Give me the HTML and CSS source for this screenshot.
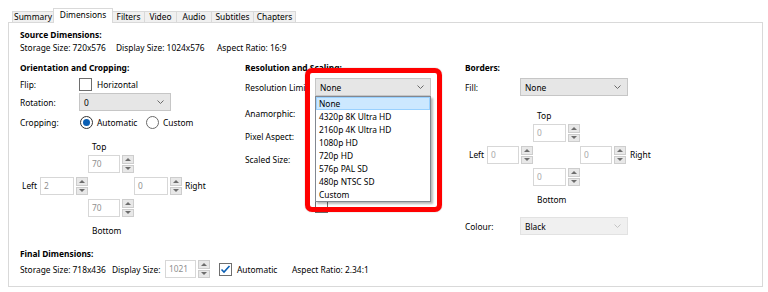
FILE: index.html
```html
<!DOCTYPE html>
<html>
<head>
<meta charset="utf-8">
<link rel="stylesheet" href="styles.css">
</head>
<body>
<div class="window">
  <div class="tabs">
    <div class="tab t-summary">Summary</div>
    <div class="tab active t-dim">Dimensions</div>
    <div class="tab t-filters">Filters</div>
    <div class="tab t-video">Video</div>
    <div class="tab t-audio">Audio</div>
    <div class="tab t-subs">Subtitles</div>
    <div class="tab t-chap">Chapters</div>
  </div>
  <div class="panel">
    <div class="source">
      <div class="heading">Source Dimensions:</div>
      <div class="info">
        <span class="i-storage">Storage Size: 720x576</span>
        <span class="i-display">Display Size: 1024x576</span>
        <span>Aspect Ratio: 16:9</span>
      </div>
    </div>

    <div class="columns">
      <div class="col col-left">
        <div class="heading">Orientation and Cropping:</div>
        <div class="row row-flip">
          <span class="label lw-left">Flip:</span>
          <span class="check"></span>
          <span class="check-label">Horizontal</span>
        </div>
        <div class="row row-rot">
          <span class="label lw-left">Rotation:</span>
          <div class="combo w-rot"><span>0</span><svg class="chev" width="7" height="4" viewBox="0 0 7 4"><path d="M.5 .5 3.5 3.5 6.5 .5" fill="none" stroke="#6a6a6a"/></svg></div>
        </div>
        <div class="row row-crop">
          <span class="label lw-left">Cropping:</span>
          <span class="radio on"></span><span class="radio-label rl-auto">Automatic</span>
          <span class="radio"></span><span class="radio-label">Custom</span>
        </div>
        <div class="cross cross-left">
          <span class="c-top">Top</span>
          <div class="spin s-top"><span class="box">70</span><span class="btns"><span class="up"></span><span class="down"></span></span></div>
          <span class="c-left">Left</span>
          <div class="spin s-left"><span class="box">2</span><span class="btns"><span class="up"></span><span class="down"></span></span></div>
          <div class="spin s-right"><span class="box">0</span><span class="btns"><span class="up"></span><span class="down"></span></span></div>
          <span class="c-right">Right</span>
          <div class="spin s-bottom"><span class="box">70</span><span class="btns"><span class="up"></span><span class="down"></span></span></div>
          <span class="c-bottom">Bottom</span>
        </div>
      </div>

      <div class="col col-mid">
        <div class="heading">Resolution and Scaling:</div>
        <div class="row mrow m-res">
          <span class="label lw-mid clip">Resolution Limit:</span>
          <div class="combo-wrap">
            <div class="combo w-mid"><span>None</span><svg class="chev" width="7" height="4" viewBox="0 0 7 4"><path d="M.5 .5 3.5 3.5 6.5 .5" fill="none" stroke="#6a6a6a"/></svg></div>
            <div class="popup">
              <div class="opt sel">None</div>
              <div class="opt">4320p 8K Ultra HD</div>
              <div class="opt">2160p 4K Ultra HD</div>
              <div class="opt">1080p HD</div>
              <div class="opt">720p HD</div>
              <div class="opt">576p PAL SD</div>
              <div class="opt">480p NTSC SD</div>
              <div class="opt">Custom</div>
            </div>
            <div class="annot"></div>
          </div>
        </div>
        <div class="row mrow m-anam">
          <span class="label lw-mid">Anamorphic:</span>
          <div class="combo w-mid"></div>
        </div>
        <div class="row mrow m-pix">
          <span class="label lw-mid">Pixel Aspect:</span>
          <div class="spin s-small"><span class="box"></span><span class="btns"><span class="up"></span><span class="down"></span></span></div>
        </div>
        <div class="row mrow m-scaled">
          <span class="label lw-mid">Scaled Size:</span>
          <div class="spin s-small"><span class="box"></span><span class="btns"><span class="up"></span><span class="down"></span></span></div>
        </div>
        <div class="row m-opt">
          <span class="label lw-mid"></span>
          <span class="check"></span>
        </div>
      </div>

      <div class="col col-right">
        <div class="heading">Borders:</div>
        <div class="row row-fill">
          <span class="label lw-right">Fill:</span>
          <div class="combo w-right"><span>None</span><svg class="chev" width="7" height="4" viewBox="0 0 7 4"><path d="M.5 .5 3.5 3.5 6.5 .5" fill="none" stroke="#6a6a6a"/></svg></div>
        </div>
        <div class="cross cross-right">
          <span class="c-top">Top</span>
          <div class="spin s-top"><span class="box light">0</span><span class="btns"><span class="up"></span><span class="down"></span></span></div>
          <span class="c-left">Left</span>
          <div class="spin s-left"><span class="box light">0</span><span class="btns"><span class="up"></span><span class="down"></span></span></div>
          <div class="spin s-right"><span class="box light">0</span><span class="btns"><span class="up"></span><span class="down"></span></span></div>
          <span class="c-right">Right</span>
          <div class="spin s-bottom"><span class="box light">0</span><span class="btns"><span class="up"></span><span class="down"></span></span></div>
          <span class="c-bottom">Bottom</span>
        </div>
        <div class="row row-colour">
          <span class="label lw-right">Colour:</span>
          <div class="combo disabled w-right"><span>Black</span><svg class="chev" width="7" height="4" viewBox="0 0 7 4"><path d="M.5 .5 3.5 3.5 6.5 .5" fill="none" stroke="#c4c4c4"/></svg></div>
        </div>
      </div>
    </div>

    <div class="final">
      <div class="heading">Final Dimensions:</div>
      <div class="row final-row">
        <span class="f-storage">Storage Size: 718x436</span>
        <span class="f-display">Display Size:</span>
        <div class="spin f-spin"><span class="box">1021</span><span class="btns"><span class="up"></span><span class="down"></span></span></div>
        <span class="check checked"><svg width="11" height="11" viewBox="0 0 11 11"><path d="M1.5 5.5 4 8 9.5 2" fill="none" stroke="#0a5fb4" stroke-width="1.6"/></svg></span>
        <span class="f-auto">Automatic</span>
        <span>Aspect Ratio: 2.34:1</span>
      </div>
    </div>
  </div>
</div>
</body>
</html>
```

FILE: styles.css
```css
* { box-sizing: border-box; }
html, body { margin: 0; background: #fff; }
body {
  font-family: "Noto Sans", "Open Sans", sans-serif;
  font-size: 8.4px;
  color: #000;
  width: 768px;
  height: 292px;
  overflow: hidden;
}
.window { padding: 8px 0 0 8px; }

/* tabs */
.tabs {
  display: flex;
  align-items: flex-end;
  padding-left: 4px;
  height: 15px;
  margin-bottom: -1px;
  position: relative;
  z-index: 2;
}
.tab {
  height: 11px;
  line-height: 9px;
  text-align: center;
  border: 1px solid #d9d9d9;
  border-bottom: 0;
  background: #f0f0f0;
  margin-right: -1px;
  margin-bottom: 1px;
  white-space: nowrap;
}
.tab.active {
  height: 15px;
  line-height: 12px;
  background: #fff;
  margin-bottom: 0;
  position: relative;
  z-index: 1;
}
.t-summary { width: 42px; }
.t-dim { width: 60px; }
.t-filters { width: 33px; }
.t-video { width: 33px; }
.t-audio { width: 36px; }
.t-subs { width: 43px; }
.t-chap { width: 43px; }

/* panel */
.panel {
  width: 755px;
  height: 265px;
  border: 1px solid #d9d9d9;
  padding: 5px 0 0 11px;
  position: relative;
}
.heading { font-weight: 700; line-height: 13px; height: 13px; white-space: nowrap; }
.info { display: flex; line-height: 13px; white-space: nowrap; }
.i-storage { width: 96px; }
.i-display { width: 101px; }

.columns { display: flex; margin-top: 7px; }
.col { display: flex; flex-direction: column; }
.col-left { width: 225px; }
.col-mid { width: 220px; }
.col-right { width: 200px; }

.row { display: flex; align-items: center; white-space: nowrap; }
.label { flex: none; }
.lw-left { width: 59px; }
.lw-mid { width: 65px; margin-right: 5px; }
.lw-right { width: 55px; }
.clip { overflow: hidden; }

.row-flip { margin-top: 3px; height: 15px; }
.row-rot { margin-top: 1px; height: 18px; }
.row-crop { margin-top: 4px; height: 15px; }

.check {
  width: 13px; height: 13px;
  border: 1px solid #6e6e6e;
  background: #fff;
  flex: none;
  display: flex; align-items: center; justify-content: center;
}
.check-label { margin-left: 5px; }

.radio {
  width: 13px; height: 13px;
  border: 1px solid #6a6a6a;
  border-radius: 50%;
  background: #fff;
  flex: none;
  display: flex; align-items: center; justify-content: center;
}
.radio.on { border-color: #333; margin-left: 1px; }
.radio.on::after {
  content: "";
  width: 7px; height: 7px;
  border-radius: 50%;
  background: #0a5fb4;
}
.radio-label { margin-left: 4px; }
.rl-auto { width: 49px; }

/* combo */
.combo {
  height: 18px;
  background: #e6e6e6;
  border: 1px solid #c6c6c6;
  display: flex;
  align-items: center;
  justify-content: space-between;
  padding: 0 6px 0 4px;
  flex: none;
}
.combo.disabled { background: #f0f0f0; border-color: #e2e2e2; }
.chev { display: block; }
.w-rot { width: 92px; }
.w-mid { width: 116px; }
.w-right { width: 108px; }

/* spinners */
.spin { display: flex; height: 18px; }
.box {
  flex: 1;
  min-width: 0;
  border: 1px solid #d7d7d7;
  background: #fff;
  color: #8f8f8f;
  padding-left: 3px;
  line-height: 16px;
}
.box.light { color: #a8a8a8; }
.btns {
  width: 12px;
  margin-left: 2px;
  display: flex;
  flex-direction: column;
  flex: none;
}
.up, .down {
  flex: 1;
  border: 1px solid #cdcdcd;
  background: #e8e8e8;
  display: flex;
  align-items: center;
  justify-content: center;
}
.down { margin-top: 1px; }
.up::after, .down::after {
  content: "";
  width: 0; height: 0;
  border-left: 3px solid transparent;
  border-right: 3px solid transparent;
}
.up::after { border-bottom: 3px solid #6d6d6d; }
.down::after { border-top: 3px solid #6d6d6d; }

/* crop / border cross */
.cross {
  display: grid;
  grid-template-rows: 15px 22px 22px 25px 13px;
  align-items: start;
}
.cross-left { grid-template-columns: 20px 48px 46px 48px auto; margin-top: 10px; }
.cross-right { grid-template-columns: 22px 46px 47px 46px auto; margin-top: 13px; }
.c-top { grid-column: 3; grid-row: 1; line-height: 13px; padding-left: 4px; }
.s-top { grid-column: 3; grid-row: 2; }
.c-left { grid-column: 1; grid-row: 3; line-height: 18px; padding-left: 2px; }
.cross-right .c-left { padding-left: 4px; }
.s-left { grid-column: 2; grid-row: 3; }
.s-right { grid-column: 4; grid-row: 3; }
.c-right { grid-column: 5; grid-row: 3; line-height: 18px; padding-left: 3px; white-space: nowrap; }
.cross-right .c-right { padding-left: 4px; }
.s-bottom { grid-column: 3; grid-row: 4; }
.c-bottom { grid-column: 3; grid-row: 5; line-height: 13px; padding-left: 4px; }

/* right column */
.row-fill { margin-top: 4px; height: 18px; }
.row-colour { margin-top: 11px; height: 18px; }

/* middle column */
.mrow { height: 18px; }
.m-res { margin-top: 4px; }
.m-anam { margin-top: 8px; }
.m-pix { margin-top: 5px; }
.m-scaled { margin-top: 5px; }
.m-opt { margin-top: 32px; height: 13px; }
.s-small { width: 45px; }

.combo-wrap { position: relative; width: 116px; height: 18px; }
.popup {
  position: absolute;
  left: 0;
  top: 18px;
  width: 116px;
  border: 1px solid #828790;
  background: #fff;
  box-shadow: 2px 2px 2px rgba(0, 0, 0, 0.28);
  z-index: 5;
}
.opt { height: 13px; line-height: 13px; padding-left: 3px; white-space: nowrap; }
.opt.sel {
  background: #cce8ff;
  border: 1px solid #99d1ff;
  line-height: 11px;
  padding-left: 2px;
}
.annot {
  position: absolute;
  left: -10px;
  top: -10px;
  width: 137px;
  height: 144px;
  border: 5px solid #ff0000;
  border-radius: 7px;
  box-shadow: 0 0 1px rgba(80, 0, 0, 0.6);
  z-index: 6;
}

/* final */
.final { margin-top: 10px; }
.final-row { height: 18px; }
.f-storage { width: 92px; }
.f-display { width: 53px; }
.f-spin { width: 45px; }
.final-row .check { margin-left: 9px; }
.f-auto { margin-left: 5px; width: 55px; }
```
